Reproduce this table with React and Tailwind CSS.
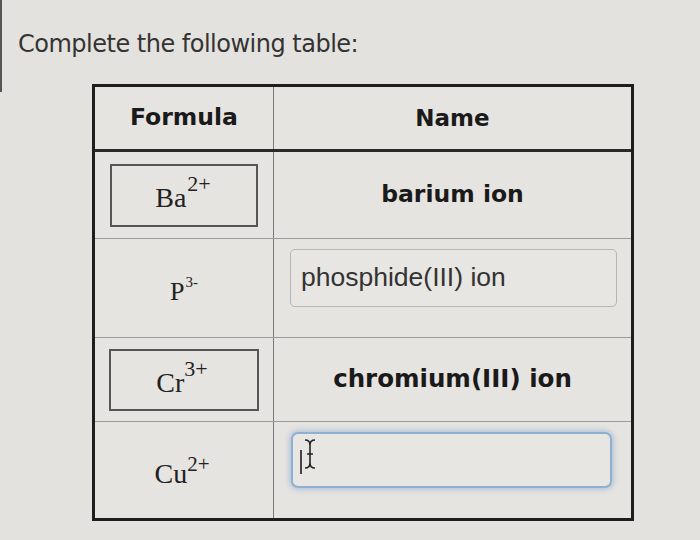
export default function App() {
  const serif = { fontFamily: '"Liberation Serif", serif' };
  return (
    <div className="w-[700px] h-[540px] bg-[#e4e2de] overflow-hidden relative" style={{ fontFamily: '"DejaVu Sans", sans-serif' }}>
      <div className="absolute left-0 top-0 w-[2px] h-[92px] bg-[#555]" />
      <div className="pl-[18px] pt-[28px] text-[24px] leading-[32px] text-[#333] tracking-[-0.5px]">
        Complete the following table:
      </div>
      <div className="ml-[92px] mt-[24px] w-[542px] border-[3px] border-[#1e1e1e] bg-[#e6e4e0]">
        <div className="grid grid-cols-[179px_1fr] h-[65px] border-b-[3px] border-[#2a2a2a]">
          <div className="flex items-center justify-center border-r border-[#7a7a7a] font-bold text-[23.5px] text-[#1a1a1a]">Formula</div>
          <div className="flex items-center justify-center font-bold text-[23px] text-[#1a1a1a]">Name</div>
        </div>
        <div className="grid grid-cols-[179px_1fr] h-[87px] border-b border-[#9a9a9a]">
          <div className="flex items-center justify-center border-r border-[#7a7a7a]">
            <div className="w-[148px] h-[63px] border-2 border-[#555] flex items-center justify-center text-[28px] leading-none text-[#222] pt-[6px] pr-[2px]" style={serif}>
              <span>Ba</span><span className="text-[22px] relative top-[-14px] ml-[1px]">2+</span>
            </div>
          </div>
          <div className="flex items-center justify-center font-bold text-[23.5px] text-[#1a1a1a]">barium ion</div>
        </div>
        <div className="grid grid-cols-[179px_1fr] h-[99px] border-b border-[#9a9a9a]">
          <div className="flex items-center justify-center border-r border-[#7a7a7a] text-[26px] leading-none text-[#222] pt-[8px]" style={serif}>
            <span>P</span><span className="text-[15px] relative top-[-10px] ml-[1px]">3-</span>
          </div>
          <div className="pt-[10px] pl-[16px] pr-[14px]">
            <div className="w-full h-[58px] rounded-[5px] border-[1.5px] border-[#b5b5b5] bg-[#e8e6e2] flex items-center pl-[10px] text-[26.5px] text-[#333]" style={{ fontFamily: '"Liberation Sans", sans-serif' }}>
              phosphide(III) ion
            </div>
          </div>
        </div>
        <div className="grid grid-cols-[179px_1fr] h-[84px] border-b border-[#9a9a9a]">
          <div className="flex items-center justify-center border-r border-[#7a7a7a]">
            <div className="w-[150px] h-[62px] border-2 border-[#555] flex items-center justify-center text-[28px] leading-none text-[#222] pt-[6px] pr-[4px]" style={serif}>
              <span>Cr</span><span className="text-[22px] relative top-[-14px]">3+</span>
            </div>
          </div>
          <div className="flex items-center justify-center font-bold text-[24.5px] text-[#1a1a1a]">chromium(III) ion</div>
        </div>
        <div className="grid grid-cols-[179px_1fr] h-[96px]">
          <div className="flex items-center justify-center border-r border-[#7a7a7a] text-[28px] leading-none text-[#222] pt-[8px] pr-[4px]" style={serif}>
            <span>Cu</span><span className="text-[21px] relative top-[-10px]">2+</span>
          </div>
          <div className="pt-[10px] pl-[17px] pr-[19px]">
            <div className="w-full h-[56px] rounded-[7px] border-2 border-[#8fb0d0] bg-[#e8e6e2] shadow-[0_0_5px_2px_rgba(120,160,210,0.45)] flex items-start pt-[4px] pl-[7px]">
              <div className="w-[1.5px] h-[24px] bg-[#444] mt-[12px]" />
              <svg width="14" height="32" viewBox="0 0 14 32" className="ml-[1px]">
                <path d="M2 2 C5 2 7 4 7 7 L7 25 C7 28 9 30 12 30 M12 2 C9 2 7 4 7 7 M7 25 C7 28 5 30 2 30 M4 16 L10 16" stroke="#222" strokeWidth="1.6" fill="none" />
              </svg>
            </div>
          </div>
        </div>
      </div>
    </div>
  );
}
